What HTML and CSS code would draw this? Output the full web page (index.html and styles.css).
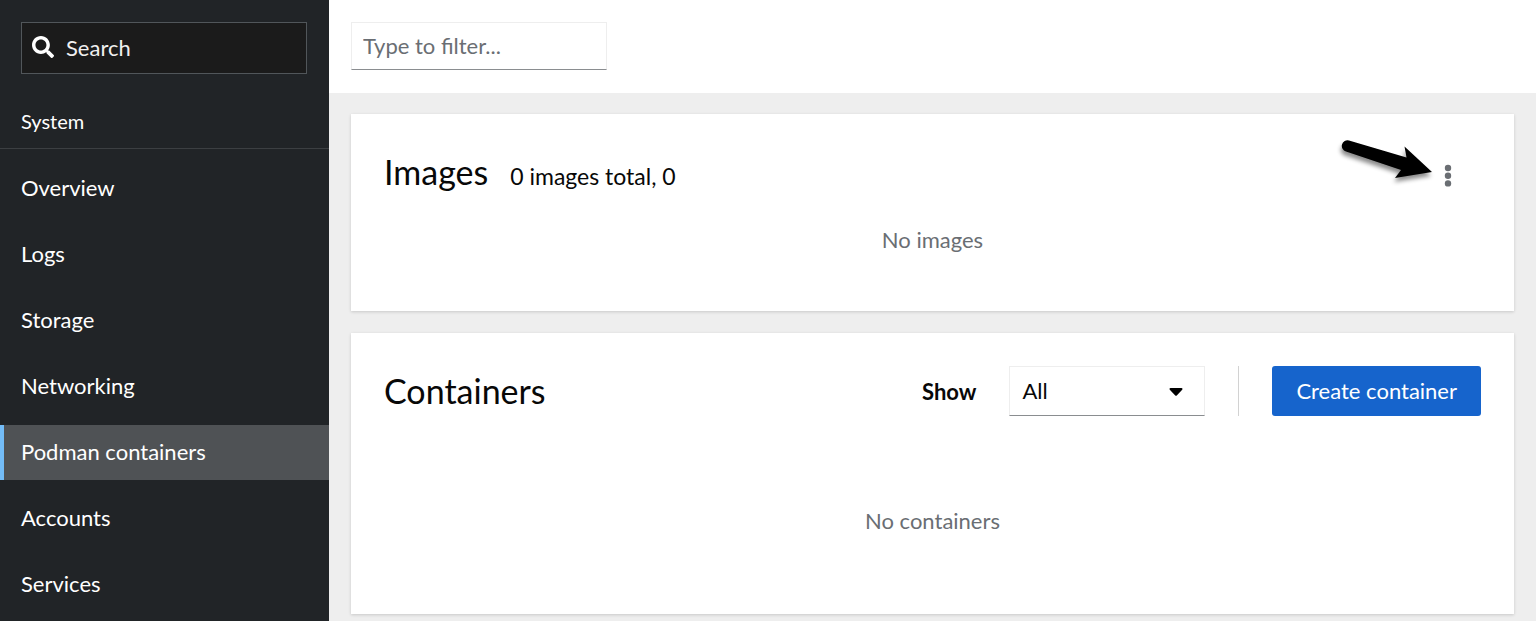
FILE: index.html
```html
<!DOCTYPE html>
<html lang="en">
<head>
<meta charset="utf-8">
<title>Podman containers</title>
<link rel="stylesheet" href="styles.css">
</head>
<body>
<div class="shell">
  <aside class="sidebar">
    <label class="search">
      <svg class="search-icon" viewBox="0 0 512 512" aria-hidden="true"><path d="M505 442.700 405.300 343c-4.500-4.500-10.600-7-17-7H372c27.600-35.300 44-79.700 44-128C416 93.100 322.900 0 208 0S0 93.100 0 208s93.100 208 208 208c48.300 0 92.700-16.400 128-44v16.300c0 6.400 2.500 12.500 7 17l99.700 99.700c9.400 9.400 24.600 9.400 33.900 0l28.300-28.300c9.400-9.400 9.400-24.600.1-34zM208 336c-70.700 0-128-57.200-128-128 0-70.700 57.200-128 128-128 70.700 0 128 57.200 128 128 0 70.700-57.200 128-128 128z"/></svg>
      <input class="search-input" type="text" placeholder="Search" aria-label="Search">
    </label>
    <nav class="nav" aria-labelledby="nav-title">
      <h2 class="nav-title" id="nav-title">System</h2>
      <ul class="nav-list">
        <li><a class="nav-link" href="#overview">Overview</a></li>
        <li><a class="nav-link" href="#logs">Logs</a></li>
        <li><a class="nav-link" href="#storage">Storage</a></li>
        <li><a class="nav-link" href="#networking">Networking</a></li>
        <li><a class="nav-link nav-link-current" href="#podman" aria-current="page">Podman containers</a></li>
        <li><a class="nav-link" href="#accounts">Accounts</a></li>
        <li><a class="nav-link" href="#services">Services</a></li>
      </ul>
    </nav>
  </aside>
  <main class="main">
    <div class="toolbar">
      <input class="filter" type="text" placeholder="Type to filter..." aria-label="Type to filter">
    </div>
    <div class="cards">
      <section class="card">
        <header class="card-header">
          <h2 class="card-title">Images</h2>
          <span class="summary">0 images total, 0</span>
          <div class="actions">
            <button class="kebab" type="button" aria-label="Image actions">
              <svg class="kebab-icon" viewBox="0 0 8 24" aria-hidden="true"><circle cx="4" cy="4" r="3.200"/><circle cx="4" cy="11.700" r="3.200"/><circle cx="4" cy="19.400" r="3.200"/></svg>
            </button>
            <svg class="pointer" viewBox="0 0 100 50" aria-hidden="true"><path d="M12 4.500 69.500 21.500 67.500 10.500 95 36 58 42 64 34 9 15.500A5.700 5.700 0 0 1 12 4.500Z"/></svg>
          </div>
        </header>
        <p class="empty">No images</p>
      </section>
      <section class="card">
        <header class="card-header">
          <h2 class="card-title">Containers</h2>
          <div class="controls">
            <label class="show-label" for="show">Show</label>
            <div class="select-wrap">
              <select class="select" id="show"><option>All</option><option>Only running</option></select>
              <svg class="caret" viewBox="0 0 14 8" aria-hidden="true"><path d="M1.500 0h11a1 1 0 0 1 .7 1.700L8 7.300a1.400 1.400 0 0 1-2 0L.8 1.700A1 1 0 0 1 1.500 0z"/></svg>
            </div>
            <div class="divider"></div>
            <button class="primary" type="button">Create container</button>
          </div>
        </header>
        <p class="empty empty-tall">No containers</p>
      </section>
    </div>
  </main>
</div>
</body>
</html>
```
FILE: styles.css
```css
* { box-sizing: border-box; }
body { margin: 0; font: 22px/33px Lato, "Open Sans", sans-serif; color: #080808; background: #eee; }
h2, p, ul { margin: 0; padding: 0; }
ul { list-style: none; }
input, select, button { font: inherit; color: inherit; margin: 0; border-radius: 0; }
.shell { display: flex; min-height: 100vh; }
.sidebar { flex: 0 0 329px; min-width: 0; background: #212427; color: #fff; padding-top: 22px; }
.search { display: flex; align-items: center; gap: 12px; height: 52px; margin: 0 22px 0 21px; padding: 0 10px 2px; background: #1b1b1b; border: 1px solid #51565a; }
.search-icon { flex: none; width: 22px; height: 22px; fill: #fff; }
.search-input { flex: 1; min-width: 0; padding: 0; border: 0; background: none; outline: none; }
.search-input::placeholder { color: #f0f0f0; opacity: 1; }
.nav-title { margin-top: 31px; padding: 0 21px 11px; font-size: 20px; line-height: 32px; font-weight: 400; border-bottom: 1px solid #3c3f42; }
.nav-list { display: grid; gap: 11px; padding-top: 12px; }
.nav-link { display: block; padding: 10px 21px 12px; color: #fff; text-decoration: none; }
.nav-link-current { background: #4f5255; border-left: 4px solid #73bcf7; padding-left: 17px; }
.main { flex: 1; min-width: 0; }
.toolbar { padding: 22px 22px 23px; background: #fff; display: flex; }
.filter { width: 256px; height: 48px; padding: 0 11px 2px; border: 1px solid #eee; border-bottom-color: #8a8d90; background: #fff; }
.filter::placeholder { color: #6a6e73; opacity: 1; }
.cards { display: grid; gap: 22px; padding: 21px 22px 22px; }
.card { padding: 33px 33px 55px; background: #fff; box-shadow: 0 1px 3px rgba(0,0,0,.16); }
.card-header { display: flex; align-items: center; min-height: 50px; }
.card-title { font-size: 34px; line-height: 50px; font-weight: 400; }
.summary { margin-left: 22px; padding-top: 8px; font-size: 23px; }
.actions { position: relative; margin-left: auto; margin-right: 22px; padding-top: 8px; }
.kebab { display: flex; width: 22px; justify-content: center; padding: 6px 0; border: 0; background: none; }
.kebab-icon { width: 8px; height: 24px; fill: #6a6e73; }
.pointer { position: absolute; right: 22px; top: -14px; width: 100px; height: 50px; fill: #000; filter: drop-shadow(-1px 4px 2px rgba(0,0,0,.45)); }
.empty { padding-top: 26px; text-align: center; color: #6a6e73; }
.empty-tall { padding: 88px 0 22px; }
.controls { display: flex; align-items: center; margin-left: auto; gap: 33px; }
.show-label { font-weight: 700; }
.select-wrap { position: relative; }
.select { display: block; width: 196px; height: 50px; padding: 0 12px 2px; appearance: none; background: #fff; border: 1px solid #eee; border-bottom-color: #8a8d90; }
.caret { position: absolute; right: 22px; top: 22px; width: 14px; height: 8px; pointer-events: none; }
.divider { width: 1px; height: 50px; background: #d2d2d2; }
.primary { height: 50px; padding: 0 24px 2px; border: 0; border-radius: 3px; background: #1664cc; color: #fff; }
```
